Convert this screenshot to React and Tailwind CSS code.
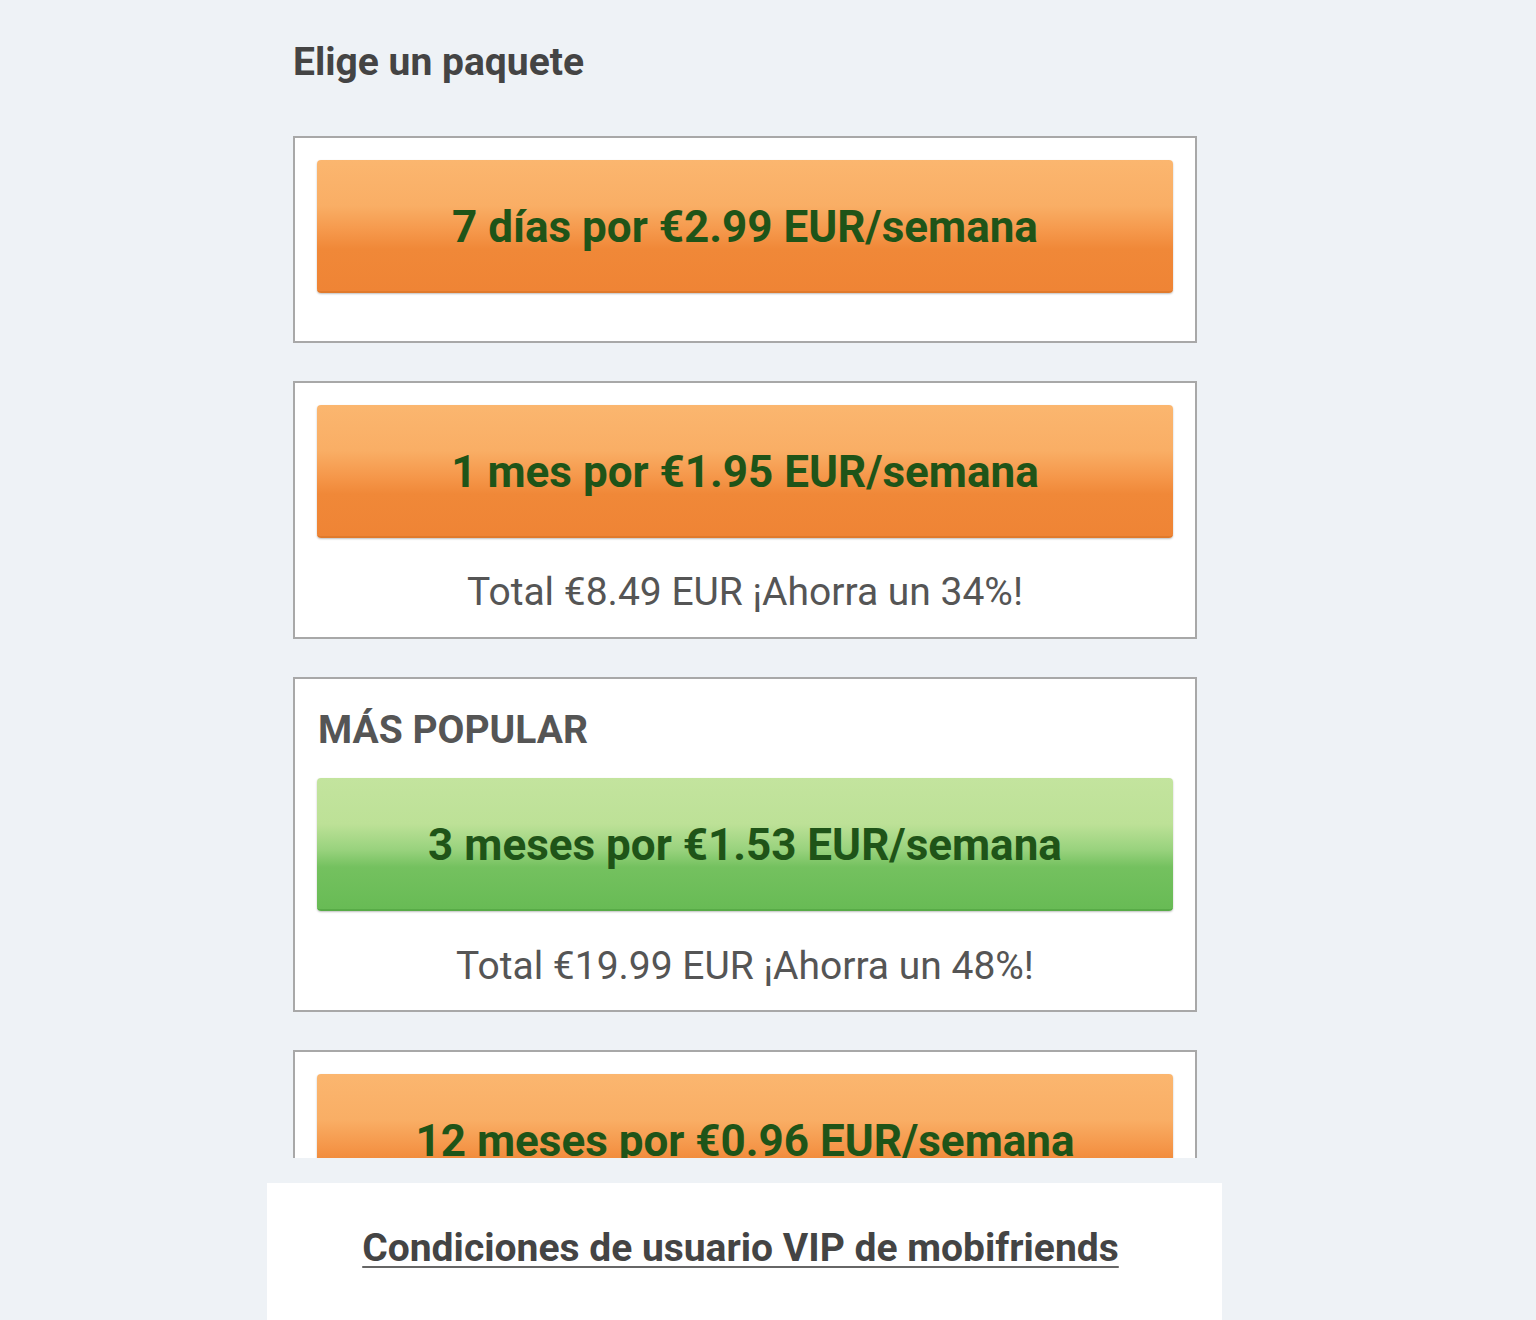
import React from "react";

const font = { fontFamily: "Roboto, 'Noto Sans', sans-serif" };

function OrangeBtn({ children }) {
  return (
    <div className="h-[133px] rounded-[4px] flex items-center justify-center border-b-2 border-[#e07a2c] bg-[linear-gradient(to_bottom,#fbb66f_0%,#f9ae65_35%,#f5974a_55%,#f08838_68%,#ef8435_100%)] shadow-[0_1px_2px_rgba(0,0,0,0.25)]">
      <span className="text-[44px] font-bold text-[#1f5418] leading-none pt-[3px]">{children}</span>
    </div>
  );
}

function GreenBtn({ children }) {
  return (
    <div className="h-[133px] rounded-[4px] flex items-center justify-center border-b-2 border-[#58ab47] bg-[linear-gradient(to_bottom,#c3e49e_0%,#bde197_35%,#98d27d_55%,#74c15f_68%,#68bb55_100%)] shadow-[0_1px_2px_rgba(0,0,0,0.25)]">
      <span className="text-[44px] font-bold text-[#1f5418] leading-none pt-[3px]">{children}</span>
    </div>
  );
}

function Card({ children, className = "" }) {
  return (
    <div className={"bg-white border-2 border-[#a8a8a8] px-[22px] " + className}>{children}</div>
  );
}

function Total({ children }) {
  return (
    <div className="text-center text-[39px] text-[#555555] leading-none">{children}</div>
  );
}

export default function App() {
  return (
    <div className="min-h-[1320px] bg-[#eef2f6] flex flex-col" style={font}>
      <div className="ml-[293px] w-[904px] h-[1158px] overflow-hidden">
        <h1 className="pt-[43px] text-[39px] font-bold text-[#444444] leading-none">Elige un paquete</h1>
        <div className="mt-[54px] flex flex-col gap-[38px]">
          <Card className="pt-[22px] h-[207px]">
            <OrangeBtn>7 días por €2.99 EUR/semana</OrangeBtn>
          </Card>
          <Card className="pt-[22px] h-[258px]">
            <OrangeBtn>1 mes por €1.95 EUR/semana</OrangeBtn>
            <div className="mt-[35px]">
              <Total>Total €8.49 EUR ¡Ahorra un 34%!</Total>
            </div>
          </Card>
          <Card className="pt-[32px] h-[335px]">
            <div className="text-[39px] font-bold text-[#555555] leading-none pl-[1px]">MÁS POPULAR</div>
            <div className="mt-[28px]">
              <GreenBtn>3 meses por €1.53 EUR/semana</GreenBtn>
            </div>
            <div className="mt-[36px]">
              <Total>Total €19.99 EUR ¡Ahorra un 48%!</Total>
            </div>
          </Card>
          <Card className="pt-[22px] h-[300px]">
            <OrangeBtn>12 meses por €0.96 EUR/semana</OrangeBtn>
          </Card>
        </div>
      </div>
      <div className="ml-[267px] mt-[25px] w-[955px] h-[137px] bg-white flex justify-center pt-[46px] pr-[8px]">
        <a className="text-[39px] font-bold text-[#444444] underline decoration-2 decoration-[#666666] underline-offset-[5px] leading-none">
          Condiciones de usuario VIP de mobifriends
        </a>
      </div>
    </div>
  );
}
